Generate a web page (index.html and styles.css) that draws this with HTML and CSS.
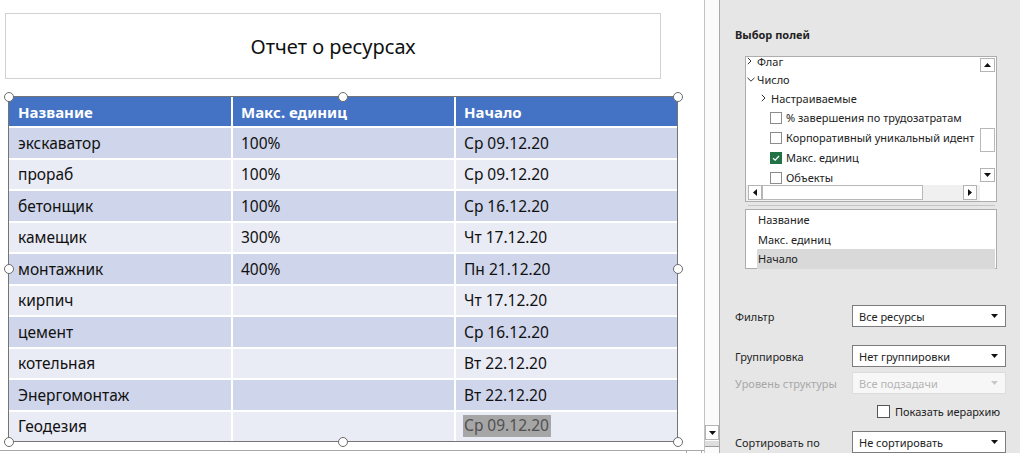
FILE: index.html
```html
<!DOCTYPE html>
<html lang="ru">
<head>
<meta charset="utf-8">
<title>Отчет о ресурсах</title>
<link rel="stylesheet" href="styles.css">
</head>
<body>
<div class="app">
  <div class="doc">
    <div class="canvas">
      <div class="title">Отчет о ресурсах</div>
      <div class="frame">
        <div class="rows">
          <div class="row head"><div>Название</div><div>Макс. единиц</div><div>Начало</div></div>
          <div class="row dark"><div>экскаватор</div><div>100%</div><div>Ср 09.12.20</div></div>
          <div class="row light"><div>прораб</div><div>100%</div><div>Ср 09.12.20</div></div>
          <div class="row dark"><div>бетонщик</div><div>100%</div><div>Ср 16.12.20</div></div>
          <div class="row light"><div>камещик</div><div>300%</div><div>Чт 17.12.20</div></div>
          <div class="row dark"><div>монтажник</div><div>400%</div><div>Пн 21.12.20</div></div>
          <div class="row light"><div>кирпич</div><div></div><div>Чт 17.12.20</div></div>
          <div class="row dark"><div>цемент</div><div></div><div>Ср 16.12.20</div></div>
          <div class="row light"><div>котельная</div><div></div><div>Вт 22.12.20</div></div>
          <div class="row dark"><div>Энергомонтаж</div><div></div><div>Вт 22.12.20</div></div>
          <div class="row light"><div>Геодезия</div><div></div><div><span class="selcell">Ср 09.12.20</span></div></div>
        </div>
        <span class="handle h-tl"></span>
        <span class="handle h-tc"></span>
        <span class="handle h-tr"></span>
        <span class="handle h-ml"></span>
        <span class="handle h-mr"></span>
        <span class="handle h-bl"></span>
        <span class="handle h-bc"></span>
        <span class="handle h-br"></span>
      </div>
    </div>
    <div class="hbar"><span class="hbar-box"></span></div>
  </div>

  <div class="vbar">
    <div class="vbar-track"></div>
    <div class="sbtn vbar-btn"><svg width="7" height="4" viewBox="0 0 7 4"><polygon points="0,0 7,0 3.5,4" fill="#111"/></svg></div>
    <div class="vbar-foot"></div>
  </div>

  <div class="panel">
    <div class="ptitle">Выбор полей</div>
    <div class="tree">
      <div class="tree-view">
        <div class="tree-list">
          <div class="ti l0"><span class="chev"><svg width="5" height="8" viewBox="0 0 5 8"><polyline points="0.8,0.8 4,4 0.8,7.2" fill="none" stroke="#333" stroke-width="1"/></svg></span>Флаг</div>
          <div class="ti l0"><span class="chev"><svg width="8" height="5" viewBox="0 0 8 5"><polyline points="0.5,0.8 4,4.2 7.5,0.8" fill="none" stroke="#333" stroke-width="1"/></svg></span>Число</div>
          <div class="ti l1"><span class="chev"><svg width="5" height="8" viewBox="0 0 5 8"><polyline points="0.8,0.8 4,4 0.8,7.2" fill="none" stroke="#333" stroke-width="1"/></svg></span>Настраиваемые</div>
          <div class="ti cb"><span class="box"></span>% завершения по трудозатратам</div>
          <div class="ti cb"><span class="box"></span>Корпоративный уникальный идент</div>
          <div class="ti cb"><span class="box on"><svg width="10" height="10" viewBox="0 0 10 10"><polyline points="2,5.2 4.2,7.2 8,3" fill="none" stroke="#fff" stroke-width="1.3"/></svg></span>Макс. единиц</div>
          <div class="ti cb"><span class="box"></span>Объекты</div>
        </div>
      </div>
      <div class="tree-vs">
        <div class="sbtn up"><svg width="7" height="4" viewBox="0 0 7 4"><polygon points="0,4 7,4 3.5,0" fill="#111"/></svg></div>
        <div class="vs-thumb"></div>
        <div class="sbtn down"><svg width="7" height="4" viewBox="0 0 7 4"><polygon points="0,0 7,0 3.5,4" fill="#111"/></svg></div>
      </div>
      <div class="tree-hs">
        <div class="sbtn left"><svg width="4" height="7" viewBox="0 0 4 7"><polygon points="4,0 4,7 0,3.5" fill="#111"/></svg></div>
        <div class="hs-thumb"></div>
        <div class="hs-track"></div>
        <div class="sbtn right"><svg width="4" height="7" viewBox="0 0 4 7"><polygon points="0,0 0,7 4,3.5" fill="#111"/></svg></div>
      </div>
      <div class="tree-corner"></div>
    </div>
    <div class="split"></div>
    <div class="list">
      <div class="li">Название</div>
      <div class="li">Макс. единиц</div>
      <div class="li sel">Начало</div>
    </div>

    <div class="frow r1">
      <div class="lbl">Фильтр</div>
      <div class="dd"><span>Все ресурсы</span><svg width="7" height="4" viewBox="0 0 7 4"><polygon points="0,0 7,0 3.5,4" fill="#111"/></svg></div>
    </div>
    <div class="frow r2">
      <div class="lbl">Группировка</div>
      <div class="dd"><span>Нет группировки</span><svg width="7" height="4" viewBox="0 0 7 4"><polygon points="0,0 7,0 3.5,4" fill="#111"/></svg></div>
    </div>
    <div class="frow r3">
      <div class="lbl dis">Уровень структуры</div>
      <div class="dd disabled"><span>Все подзадачи</span><svg width="7" height="4" viewBox="0 0 7 4"><polygon points="0,0 7,0 3.5,4" fill="#c8c8c8"/></svg></div>
    </div>
    <div class="crow">
      <span class="box"></span><span>Показать иерархию</span>
    </div>
    <div class="frow r5">
      <div class="lbl">Сортировать по</div>
      <div class="dd"><span>Не сортировать</span><svg width="7" height="4" viewBox="0 0 7 4"><polygon points="0,0 7,0 3.5,4" fill="#111"/></svg></div>
    </div>
  </div>
</div>
</body>
</html>
```

FILE: styles.css
```css
* { box-sizing: border-box; }
html, body { margin: 0; padding: 0; }
body {
  width: 1020px;
  height: 453px;
  overflow: hidden;
  font-family: "Noto Sans", "Open Sans", sans-serif;
  background: #fff;
}
.app { display: flex; width: 1020px; height: 453px; }

/* document area */
.doc { width: 704px; height: 453px; display: flex; flex-direction: column; background: #fff; }
.canvas { height: 450px; padding-top: 13px; overflow: hidden; }
.title {
  margin-left: 5px;
  width: 656px;
  height: 66px;
  border: 1px solid #d2d2d2;
  display: flex;
  align-items: center;
  justify-content: center;
  font-size: 20px;
  color: #111;
}
.frame {
  position: relative;
  margin-top: 17px;
  margin-left: 8px;
  width: 670px;
  height: 346px;
  border: 1px solid #747474;
  background: #fff;
}
.rows { display: flex; flex-direction: column; gap: 2px; }
.row {
  display: grid;
  grid-template-columns: 222px 221px 221px;
  column-gap: 2px;
  height: 29.5px;
  font-size: 15.5px;
  color: #111;
}
.row > div { display: flex; align-items: center; padding-left: 8px; white-space: nowrap; }
.row > div:first-child { padding-left: 9px; }
.row.head { height: 29px; font-size: 15px; font-weight: 700; color: #fff; }
.row.head > div { background: #4472c4; }
.row.dark > div { background: #cfd5ea; }
.row.light > div { background: #e9ebf5; }
.selcell {
  background: #a6a6a6;
  color: #505050;
  padding: 1px 2px 2px 1px;
  margin-left: -1px;
  line-height: 19px;
}
.handle {
  position: absolute;
  width: 10px;
  height: 10px;
  border-radius: 50%;
  border: 1.5px solid #6b6b6b;
  background: #fff;
  transform: translate(-50%, -50%);
}
.h-tl { left: -0.5px; top: -0.5px; }
.h-tc { left: 50%; top: -0.5px; }
.h-tr { left: calc(100% + 0.5px); top: -0.5px; }
.h-ml { left: -0.5px; top: 50%; }
.h-mr { left: calc(100% + 0.5px); top: 50%; }
.h-bl { left: -0.5px; top: calc(100% + 0.5px); }
.h-bc { left: 50%; top: calc(100% + 0.5px); }
.h-br { left: calc(100% + 0.5px); top: calc(100% + 0.5px); }

.hbar { height: 3px; border-top: 1px solid #a8a8a8; display: flex; justify-content: flex-end; }
.hbar-box { width: 16px; height: 2px; border-left: 1px solid #a8a8a8; border-right: 1px solid #a8a8a8; margin-right: 2px; }

/* document vertical scrollbar */
.vbar {
  width: 16px;
  height: 453px;
  display: flex;
  flex-direction: column;
  border-left: 1px solid #c2c2c2;
  border-right: 1px solid #a9a9a9;
  background: #fbfbfb;
}
.vbar-track { height: 425px; }
.sbtn {
  display: flex;
  align-items: center;
  justify-content: center;
  background: #fff;
  border: 1px solid #b4b4b4;
}
.vbar-btn { height: 15px; }
.vbar-foot { height: 6px; margin-top: 1px; background: #dedede; border-bottom: 1px solid #9a9a9a; }

/* right panel */
.panel {
  width: 300px;
  height: 453px;
  background: #e6e6e6;
  padding: 28px 0 0 15px;
  font-size: 11px;
  color: #262626;
}
.ptitle { font-weight: 700; font-size: 11px; line-height: 14px; color: #222; }

.tree {
  margin-top: 14px;
  margin-left: 10px;
  width: 252px;
  height: 146px;
  border: 1px solid #adadad;
  background: #fff;
  display: grid;
  grid-template-columns: 234px 16px;
  grid-template-rows: 128px 16px;
}
.tree-view { overflow: hidden; }
.tree-list { margin-top: -5px; }
.ti { display: flex; align-items: center; height: 18.5px; white-space: nowrap; color: #222; }
.ti.cb { height: 20px; padding-left: 24px; }
.ti.l1 { padding-left: 14px; }
.chev { width: 11px; display: flex; align-items: center; padding-left: 1px; }
.box {
  width: 12px;
  height: 12px;
  border: 1px solid #8c8c8c;
  background: #fff;
  margin-right: 4px;
  flex: none;
  display: flex;
  align-items: center;
  justify-content: center;
}
.box.on { background: #217346; border-color: #217346; }

.tree-vs { display: flex; flex-direction: column; background: #fff; padding: 1px 1px 0 0; }
.tree-vs .up { height: 14px; }
.vs-thumb { margin-top: 56px; height: 24px; border: 1px solid #b8b8b8; background: #fff; }
.tree-vs .down { margin-top: 16px; height: 14px; }
.tree-hs { display: flex; background: #f0f0f0; padding: 0 2px 1px 2px; }
.tree-hs .left, .tree-hs .right { width: 14px; }
.hs-thumb { width: 161px; border: 1px solid #b8b8b8; background: #fff; }
.hs-track { width: 40px; }
.tree-corner { background: #fff; }

.split { margin: 3px 2px 0 13px; width: 247px; height: 1px; background: #c6c6c6; }
.list {
  margin-top: 3px;
  margin-left: 10px;
  width: 252px;
  height: 60px;
  border: 1px solid #adadad;
  background: #fff;
}
.li { height: 19.5px; line-height: 19.5px; margin-left: 11px; margin-right: 1px; padding-left: 1px; color: #222; }
.li.sel { background: #d9d9d9; }

.frow { display: flex; align-items: center; height: 22px; }
.frow.r1 { margin-top: 36px; }
.frow.r2 { margin-top: 18px; }
.frow.r3 { margin-top: 5px; }
.frow.r5 { margin-top: 13px; }
.lbl { width: 117px; white-space: nowrap; }
.lbl.dis { color: #a8a8a8; }
.dd {
  width: 154px;
  height: 22px;
  border: 1px solid #7c7c7c;
  background: #fff;
  display: flex;
  align-items: center;
  justify-content: space-between;
  padding: 0 7px 0 6px;
  color: #222;
}
.dd.disabled { border-color: #dcdcdc; background: #f7f7f7; color: #b4b4b4; }
.crow { display: flex; align-items: center; height: 13px; margin-top: 11px; padding-left: 142px; color: #222; }
.crow .box { width: 13px; height: 13px; border-color: #555; margin-right: 5px; }
```
